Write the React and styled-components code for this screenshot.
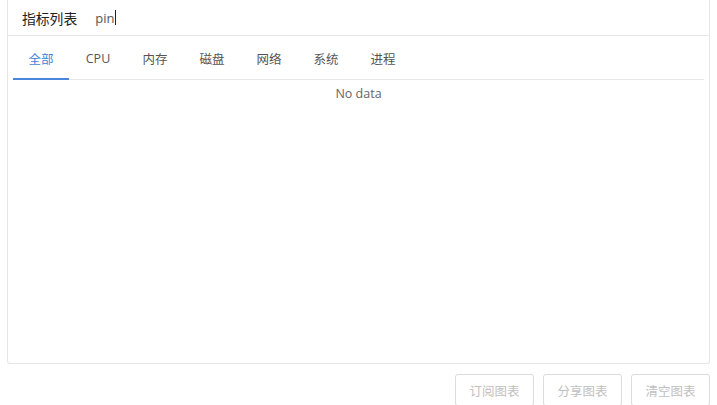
import React from "react";
import styled, { createGlobalStyle } from "styled-components";

const GlobalStyle = createGlobalStyle`
  html, body {
    margin: 0;
    padding: 0;
    background: #fff;
    font-family: "Open Sans", "Noto Sans CJK SC", sans-serif;
    overflow: hidden;
  }
`;

const Page = styled.div`
  width: 717px;
  height: 405px;
  padding: 0 7px 0 7px;
  box-sizing: border-box;
  display: flex;
  flex-direction: column;
`;

const Panel = styled.div`
  height: 364px;
  flex-shrink: 0;
  box-sizing: border-box;
  border: 1px solid #e6e6e6;
  border-top: none;
  border-radius: 0 0 3px 3px;
  display: flex;
  flex-direction: column;
`;

const Header = styled.div`
  height: 35px;
  flex-shrink: 0;
  border-bottom: 1px solid #e8e8e8;
  display: flex;
  align-items: center;
  padding-left: 14px;
  gap: 18px;
  font-size: 13px;
`;

const Title = styled.span`
  color: #222;
  font-size: 13.8px;
`;

const Search = styled.div`
  display: flex;
  align-items: center;
  color: #555;
  font-size: 13px;
`;

const Caret = styled.span`
  display: inline-block;
  width: 1px;
  height: 15px;
  background: #222;
  margin-left: 1px;
`;

const Tabs = styled.div`
  margin: 0 5px;
  height: 43px;
  flex-shrink: 0;
  border-bottom: 1px solid #e8e8e8;
  display: flex;
  gap: 1px;
`;

const Tab = styled.div`
  min-width: 56px;
  box-sizing: border-box;
  display: flex;
  align-items: center;
  justify-content: center;
  font-size: 12.5px;
  color: ${(p) => (p.$active ? "#3f7fd8" : "#555")};
  border-bottom: 2px solid ${(p) => (p.$active ? "#4a86d9" : "transparent")};
  margin-bottom: -1px;
  padding-top: 2px;
`;

const Empty = styled.div`
  text-align: center;
  color: #666;
  font-size: 12.5px;
  padding-top: 5px;
`;

const Footer = styled.div`
  display: flex;
  justify-content: flex-end;
  gap: 9px;
  padding-top: 10px;
`;

const Button = styled.button`
  width: 79px;
  height: 32px;
  box-sizing: border-box;
  border: 1px solid #dcdcdc;
  border-radius: 3px;
  background: #fff;
  color: #c0c0c0;
  font-family: inherit;
  font-size: 12.5px;
  padding: 0;
  cursor: not-allowed;
`;

const tabs = ["全部", "CPU", "内存", "磁盘", "网络", "系统", "进程"];

export default function App() {
  return (
    <>
      <GlobalStyle />
      <Page>
        <Panel>
          <Header>
            <Title>指标列表</Title>
            <Search>
              pin
              <Caret />
            </Search>
          </Header>
          <Tabs>
            {tabs.map((t, i) => (
              <Tab key={t} $active={i === 0}>
                {t}
              </Tab>
            ))}
          </Tabs>
          <Empty>No data</Empty>
        </Panel>
        <Footer>
          <Button disabled>订阅图表</Button>
          <Button disabled>分享图表</Button>
          <Button disabled>清空图表</Button>
        </Footer>
      </Page>
    </>
  );
}
